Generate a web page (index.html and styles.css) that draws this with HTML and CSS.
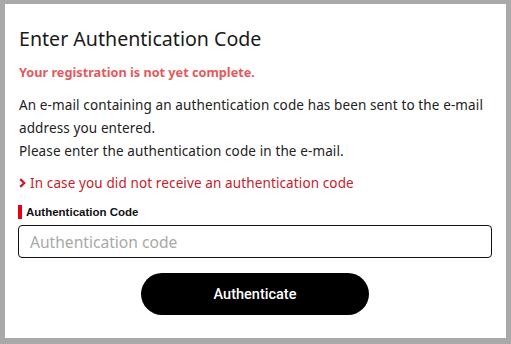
FILE: index.html
```html
<!DOCTYPE html>
<html lang="en">
<head>
<meta charset="utf-8">
<title>Enter Authentication Code</title>
<link rel="stylesheet" href="styles.css">
</head>
<body>
<div class="panel">
  <h1 class="title">Enter Authentication Code</h1>
  <p class="notice">Your registration is not yet complete.</p>
  <p class="desc">An e-mail containing an authentication code has been sent to the e-mail address you entered.<br>Please enter the authentication code in the e-mail.</p>
  <a class="help-link" href="#"><svg class="chev" width="7" height="10" viewBox="0 0 7 10"><path d="M1.2 1.2 L5.2 5 L1.2 8.8" fill="none" stroke="#c8202a" stroke-width="2.4"/></svg>In case you did not receive an authentication code</a>
  <div class="field">
    <label class="label" for="code">Authentication Code</label>
    <input class="input" id="code" type="text" placeholder="Authentication code">
  </div>
  <div class="actions">
    <button class="btn" type="button">Authenticate</button>
  </div>
</div>
</body>
</html>
```
FILE: styles.css
```css
html, body {
  margin: 0;
  padding: 0;
}
body {
  background: #a9a9a9;
  padding: 4px 5px 6px 5px;
  font-family: "Noto Sans", "DejaVu Sans", sans-serif;
  color: #222;
}
.panel {
  background: #fff;
  height: 334px;
  box-sizing: border-box;
  padding: 1px 14px 0 13px;
  display: flex;
  flex-direction: column;
}
.title {
  margin: 20px 0 0 1px;
  font-size: 19.6px;
  font-weight: 400;
  line-height: 28px;
  color: #1a1a1a;
}
.notice {
  margin: 9px 0 0 1px;
  font-size: 12.7px;
  font-weight: 700;
  line-height: 20px;
  color: #e35a5e;
}
.desc {
  margin: 12px 0 0 1px;
  font-size: 13.5px;
  letter-spacing: 0.12px;
  line-height: 23px;
  color: #222;
}
.help-link {
  margin: 10px 0 0 1px;
  display: flex;
  align-items: center;
  gap: 4px;
  font-size: 13.5px;
  letter-spacing: 0.12px;
  line-height: 20px;
  color: #c8202a;
  text-decoration: none;
}
.chev {
  display: block;
}
.field {
  margin-top: 12px;
  display: flex;
  flex-direction: column;
}
.label {
  border-left: 4px solid #e60012;
  padding-left: 4px;
  font-family: "Liberation Sans", Arial, sans-serif;
  font-weight: 700;
  font-size: 11.5px;
  line-height: 14px;
  color: #111;
}
.input {
  margin-top: 6px;
  height: 33px;
  box-sizing: border-box;
  border: 1px solid #111;
  border-radius: 4px;
  padding: 0 11px;
  font-family: "Noto Sans", sans-serif;
  font-size: 15.6px;
  color: #222;
  outline: none;
}
.input::placeholder {
  color: #a8a8a8;
}
.actions {
  margin-top: 15px;
  display: flex;
  justify-content: center;
}
.btn {
  width: 228px;
  height: 42px;
  border: none;
  border-radius: 21px;
  background: #000;
  color: #fff;
  font-family: "Roboto", "Liberation Sans", sans-serif;
  font-size: 14.5px;
  font-weight: 500;
  cursor: pointer;
}
```
